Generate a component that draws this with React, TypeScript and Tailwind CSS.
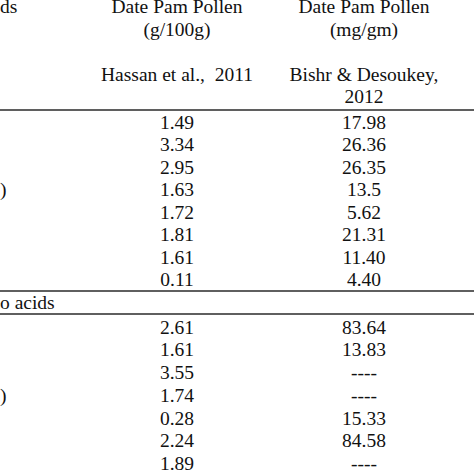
const first = [
  ["", "1.49", "17.98"],
  ["", "3.34", "26.36"],
  ["", "2.95", "26.35"],
  [")", "1.63", "13.5"],
  ["", "1.72", "5.62"],
  ["", "1.81", "21.31"],
  ["", "1.61", "11.40"],
  ["", "0.11", "4.40"],
];

const second = [
  ["", "2.61", "83.64"],
  ["", "1.61", "13.83"],
  ["", "3.55", "----"],
  [")", "1.74", "----"],
  ["", "0.28", "15.33"],
  ["", "2.24", "84.58"],
  ["", "1.89", "----"],
];

function Row({ cells, lh }: { cells: string[]; lh: string }) {
  return (
    <div className={`grid grid-cols-[97px_160px_214px] ${lh}`}>
      <div>{cells[0]}</div>
      <div className="text-center">{cells[1]}</div>
      <div className="text-center">{cells[2]}</div>
    </div>
  );
}

export default function App() {
  return (
    <div
      className="w-[474px] h-[474px] overflow-hidden bg-white text-[19.5px] text-[#111]"
      style={{ fontFamily: '"Liberation Serif", "Times New Roman", serif' }}
    >
      <div className="-mt-[4px] grid grid-cols-[97px_160px_214px] leading-[22.5px]">
        <div>ds</div>
        <div className="text-center">
          <div>Date Pam Pollen</div>
          <div>(g/100g)</div>
          <div>&nbsp;</div>
          <div className="whitespace-pre">Hassan et al.,  2011</div>
        </div>
        <div className="text-center">
          <div>Date Pam Pollen</div>
          <div>(mg/gm)</div>
          <div>&nbsp;</div>
          <div>Bishr &amp; Desoukey,</div>
          <div>2012</div>
        </div>
      </div>
      <div className="h-[2px] bg-[#5f5f5f]" />
      <div className="pt-[1px]">
        {first.map((r, i) => (
          <Row key={i} cells={r} lh="leading-[22.5px]" />
        ))}
      </div>
      <div className="-mt-[2px] h-[2px] bg-[#5f5f5f]" />
      <div className="leading-[21px] h-[21px]">o acids</div>
      <div className="h-[2px] bg-[#5f5f5f]" />
      <div className="pt-[2px]">
        {second.map((r, i) => (
          <Row key={i} cells={r} lh="leading-[22.8px]" />
        ))}
      </div>
    </div>
  );
}
